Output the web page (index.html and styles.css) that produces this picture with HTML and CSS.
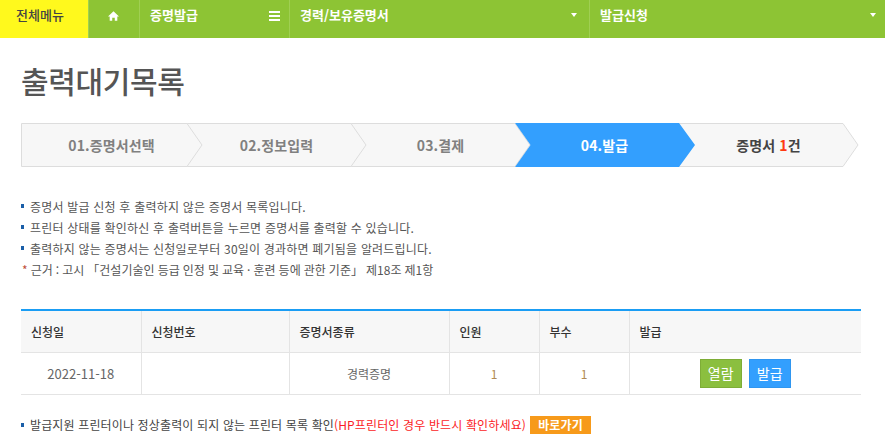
FILE: index.html
```html
<!DOCTYPE html>
<html lang="ko">
<head>
<meta charset="utf-8">
<title>출력대기목록</title>
<link rel="stylesheet" href="styles.css">
</head>
<body>
<nav class="nav">
  <a class="nav-all">전체메뉴</a>
  <a class="nav-item nav-home">
    <svg width="11" height="10" viewBox="0 0 13 11"><path d="M6.500 0 13 6h-2v5H8V7.500H5V11H2V6H0z" fill="#fff"/></svg>
  </a>
  <a class="nav-item nav-issue"><span>증명발급</span>
    <svg width="11" height="10" viewBox="0 0 11 10"><path d="M0 0h11v2H0zM0 4h11v2H0zM0 8h11v2H0z" fill="#fff"/></svg>
  </a>
  <a class="nav-item nav-career"><span>경력/보유증명서</span><i class="caret"></i></a>
  <a class="nav-item nav-apply"><span>발급신청</span><i class="caret"></i></a>
</nav>
<main class="content">
  <h1 class="title">출력대기목록</h1>
  <ol class="steps">
    <li class="step step-first">
      <svg class="step-bg" width="182" height="44" viewBox="0 0 182 44"><path d="M.5.5H166L181 22 166 43.500H.5z" fill="#f7f7f7" stroke="#ddd"/></svg>
      <span class="step-label">01.증명서선택</span>
    </li>
    <li class="step">
      <svg class="step-bg" width="180" height="44" viewBox="0 0 180 44"><path d="M0 .5H164L179 22 164 43.500H0" fill="#f7f7f7" stroke="#ddd"/></svg>
      <span class="step-label">02.정보입력</span>
    </li>
    <li class="step">
      <svg class="step-bg" width="180" height="44" viewBox="0 0 180 44"><path d="M0 .5H164L179 22 164 43.500H0" fill="#f7f7f7" stroke="#ddd"/></svg>
      <span class="step-label">03.결제</span>
    </li>
    <li class="step step-on">
      <svg class="step-bg" width="180" height="44" viewBox="0 0 180 44"><path d="M0 0H164L180 22 164 44H0L15.500 22z" fill="#339ffe"/></svg>
      <span class="step-label">04.발급</span>
    </li>
    <li class="step step-count">
      <svg class="step-bg" width="180" height="44" viewBox="0 0 180 44"><path d="M0 .5H164L179 22 164 43.500H0" fill="#f7f7f7" stroke="#ddd"/></svg>
      <span class="step-label">증명서 <em>1</em>건</span>
    </li>
  </ol>
  <ul class="notes">
    <li>증명서 발급 신청 후 출력하지 않은 증명서 목록입니다.</li>
    <li>프린터 상태를 확인하신 후 출력버튼을 누르면 증명서를 출력할 수 있습니다.</li>
    <li>출력하지 않는 증명서는 신청일로부터 30일이 경과하면 폐기됨을 알려드립니다.</li>
    <li class="note-star"><span class="star">*</span> 근거 : 고시 「건설기술인 등급 인정 및 교육 · 훈련 등에 관한 기준」 제18조 제1항</li>
  </ul>
  <table class="list">
    <colgroup>
      <col class="c1"><col class="c2"><col class="c3"><col class="c4"><col class="c5"><col>
    </colgroup>
    <thead>
      <tr><th>신청일</th><th>신청번호</th><th>증명서종류</th><th>인원</th><th>부수</th><th>발급</th></tr>
    </thead>
    <tbody>
      <tr>
        <td class="date">2022-11-18</td><td></td><td>경력증명</td><td class="num">1</td><td class="num">1</td>
        <td><a class="btn btn-green">열람</a><a class="btn btn-blue">발급</a></td>
      </tr>
    </tbody>
  </table>
  <p class="printer">발급지원 프린터이나 정상출력이 되지 않는 프린터 목록 확인<span class="warn">(HP프린터인 경우 반드시 확인하세요)</span><a class="go">바로가기</a></p>
</main>
</body>
</html>
```
FILE: styles.css
```css
* { box-sizing: border-box; }
html, body { margin: 0; padding: 0; }
body {
  width: 885px;
  height: 441px;
  overflow: hidden;
  background: #fff;
  color: #555;
  font-family: "Noto Sans CJK KR", "Noto Sans", sans-serif;
  font-size: 12px;
}
.nav {
  display: flex;
  height: 38px;
  background: #8dc434;
  color: #fff;
  font-size: 13px;
  font-weight: 700;
}
.nav-all {
  width: 88px;
  background: #fff91d;
  color: #444;
  padding: 6px 0 0 16px;
  line-height: 18px;
  font-weight: 500;
}
.nav-item {
  display: flex;
  justify-content: space-between;
  padding: 6px 12px 0 10px;
  line-height: 18px;
  border-left: 1px solid #a0cf52;
}
.nav-home { width: 51px; padding: 11px 0 0 19px; }
.nav-issue { width: 150px; padding-right: 9px; }
.nav-issue svg { margin-top: 5px; }
.nav-career { width: 300px; }
.nav-apply { flex: 1; padding-right: 9px; }
.caret {
  width: 0;
  height: 0;
  margin-top: 7px;
  border: 3.5px solid transparent;
  border-top: 4px solid #fff;
  border-bottom: 0;
}
.content { padding: 0 24px 0 21px; }
.title {
  margin: 19px 0 0;
  font-size: 30px;
  line-height: 46px;
  font-weight: 500;
  letter-spacing: -.35px;
  color: #555;
}
.steps {
  display: flex;
  list-style: none;
  margin: 20px 0 0;
  padding: 0;
  height: 44px;
}
.step {
  position: relative;
  width: 164px;
  font-size: 14px;
  font-weight: 700;
  letter-spacing: .1px;
  color: #808080;
}
.step:nth-child(1) { z-index: 5; }
.step:nth-child(2) { z-index: 4; }
.step:nth-child(3) { z-index: 3; }
.step:nth-child(4) { z-index: 4; }
.step:nth-child(5) { z-index: 1; }
.step-first { width: 166px; }
.step-bg { position: absolute; left: 0; top: 0; }
.step-label {
  position: relative;
  display: block;
  width: calc(100% + 15px);
  text-align: center;
  line-height: 44px;
}
.step-on { color: #fff; }
.step-count { color: #444; }
.step-count em { font-style: normal; color: #ff3a12; }
.notes {
  list-style: none;
  margin: 29px 0 0;
  padding: 0;
  line-height: 21px;
  font-size: 12px;
  color: #555;
  letter-spacing: .2px;
}
.notes li { position: relative; padding-left: 9px; white-space: nowrap; }
.notes li::before {
  content: "";
  position: absolute;
  left: 0;
  top: 8px;
  width: 3px;
  height: 4px;
  background: #1a5ea8;
}
.notes .note-star { padding-left: 1px; letter-spacing: .03px; word-spacing: -.4px; }
.notes .note-star::before { display: none; }
.star { color: #c0503a; }
.list {
  width: 840px;
  margin-top: 29px;
  border-collapse: collapse;
  table-layout: fixed;
  border-top: 2px solid #1a9df4;
}
.c1 { width: 120px; }
.c2 { width: 148px; }
.c3 { width: 160px; }
.c4 { width: 90px; }
.c5 { width: 90px; }
.list th {
  height: 42px;
  padding: 0 0 0 10px;
  background: #f7f7f7;
  border-left: 1px solid #e4e4e4;
  border-bottom: 1px solid #e4e4e4;
  text-align: left;
  font-size: 12px;
  font-weight: 500;
  color: #333;
}
.list td {
  height: 42px;
  padding: 0;
  border-left: 1px solid #e4e4e4;
  border-bottom: 1px solid #e4e4e4;
  text-align: center;
  font-size: 12px;
  color: #666;
}
.list th:first-child, .list td:first-child { border-left: 0; }
.list .date { font-size: 13px; }
.list .num { color: #b08a55; }
.btn {
  display: inline-block;
  width: 42px;
  height: 29px;
  line-height: 27px;
  color: #fff;
  font-size: 14px;
  vertical-align: middle;
}
.btn-green { background: #8bbf3f; border: 1px solid #7ead37; margin-right: 7px; }
.btn-blue { background: #339ffe; border: 1px solid #2f96f0; }
.printer {
  margin: 21px 0 0;
  position: relative;
  padding-left: 9px;
  font-size: 12px;
  line-height: 18px;
  color: #444;
  letter-spacing: .14px;
  white-space: nowrap;
}
.printer::before {
  content: "";
  position: absolute;
  left: 0;
  top: 7px;
  width: 3px;
  height: 4px;
  background: #1a5ea8;
}
.warn { color: #fb1c26; }
.go {
  display: inline-block;
  width: 61px;
  height: 18px;
  margin-left: 4px;
  background: #f79a1a;
  color: #fff;
  font-weight: 700;
  text-align: center;
  line-height: 18px;
  vertical-align: top;
}
```
